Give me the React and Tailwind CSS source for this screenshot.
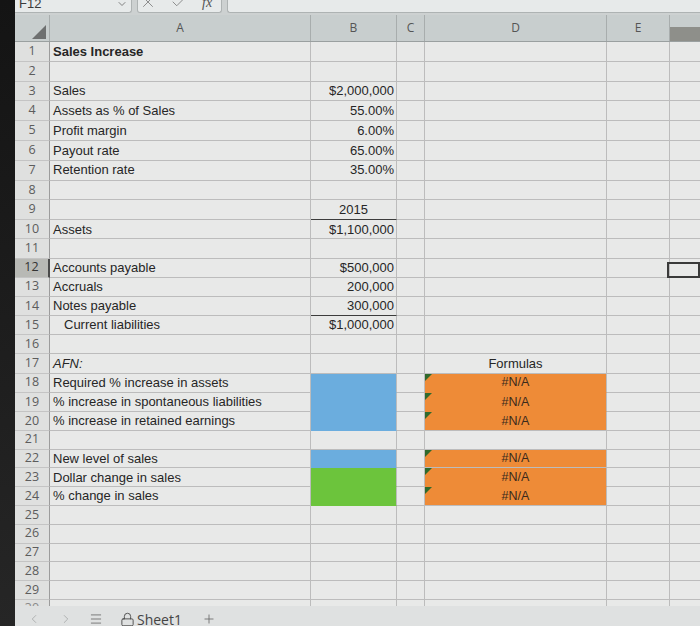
import React from 'react';
import { ChevronDown, X, Check, ChevronLeft, ChevronRight, Menu, Lock, Plus } from 'lucide-react';

const rows = [
  { n: 1, a: 'Sales Increase', aCls: 'font-bold' },
  { n: 2 },
  { n: 3, a: 'Sales', b: '$2,000,000' },
  { n: 4, a: 'Assets as % of Sales', b: '55.00%' },
  { n: 5, a: 'Profit margin', b: '6.00%' },
  { n: 6, a: 'Payout rate', b: '65.00%' },
  { n: 7, a: 'Retention rate', b: '35.00%' },
  { n: 8 },
  { n: 9, b: '2015', bCenter: true, bLine: 'bottom' },
  { n: 10, a: 'Assets', b: '$1,100,000' },
  { n: 11 },
  { n: 12, a: 'Accounts payable', b: '$500,000', selected: true },
  { n: 13, a: 'Accruals', b: '200,000' },
  { n: 14, a: 'Notes payable', b: '300,000', bLine: 'bottom' },
  { n: 15, a: 'Current liabilities', aCls: 'pl-[14px]', b: '$1,000,000' },
  { n: 16 },
  { n: 17, a: 'AFN:', aCls: 'italic', d: 'Formulas' },
  { n: 18, a: 'Required % increase in assets', fill: 'blue', d: '#N/A', orange: true },
  { n: 19, a: '% increase in spontaneous liabilities', fill: 'blue', d: '#N/A', orange: true },
  { n: 20, a: '% increase in retained earnings', fill: 'blue', d: '#N/A', orange: true, last: true },
  { n: 21 },
  { n: 22, a: 'New level of sales', fill: 'blue', d: '#N/A', orange: true, last: true },
  { n: 23, a: 'Dollar change in sales', fill: 'green', d: '#N/A', orange: true },
  { n: 24, a: '% change in sales', fill: 'green', d: '#N/A', orange: true, last: true },
  { n: 25 },
  { n: 26 },
  { n: 27 },
  { n: 28 },
  { n: 29 },
];

function rowHeight(n) {
  if (n <= 9) return 'h-[19.8px]';
  if (n <= 19) return 'h-[19.2px]';
  return 'h-[18.8px]';
}

function bCellClass(r) {
  if (r.fill === 'blue') return 'bg-[#6badde] border-b-[#6badde]';
  if (r.fill === 'green') return 'bg-[#6cc43c] border-b-[#6cc43c]';
  if (r.bLine === 'bottom') return 'border-b-[#3c3c3c]';
  return 'border-b-[#bcbcbc]';
}

function Row({ r }) {
  const h = rowHeight(r.n);
  const bAlign = r.bCenter ? 'justify-center' : 'justify-end pr-[2px]';
  return (
    <div className={`flex ${h} text-[13px] text-[#262626]`}>
      <div
        className={`w-[35px] shrink-0 flex items-center justify-center border-b border-[#c4c4c4] text-[12.5px] font-['Open_Sans',sans-serif] ${
          r.selected ? 'bg-[#b8b9b5] border-r-2 border-r-[#4a4a4a] text-[#333]' : 'bg-[#dfe0df] border-r border-r-[#9c9c9c] text-[#5c5c5c]'
        }`}
      >
        {r.n}
      </div>
      <div className={`w-[261px] shrink-0 flex items-center pl-[3px] border-r border-b border-[#bcbcbc] whitespace-nowrap overflow-hidden ${r.aCls || ''}`}>
        {r.a}
      </div>
      <div className={`w-[86px] shrink-0 flex items-center ${bAlign} border-r border-b border-r-[#bcbcbc] ${bCellClass(r)}`}>
        {r.b}
      </div>
      <div className="w-[28px] shrink-0 border-r border-b border-[#bcbcbc]" />
      <div
        className={`relative w-[182px] shrink-0 flex items-center justify-center border-r border-b border-r-[#bcbcbc] ${
          r.orange ? (r.last ? 'bg-[#ee8b37] border-b-[#bcbcbc]' : 'bg-[#ee8b37] border-b-[#ee8b37]') : 'border-b-[#bcbcbc]'
        }`}
      >
        {r.orange && (
          <span className="absolute left-0 top-0 w-0 h-0 border-t-[7px] border-t-[#2f6a2c] border-r-[7px] border-r-transparent" />
        )}
        <span className={r.orange ? 'text-[12.5px] text-[#3a2a1c]' : ''}>{r.d}</span>
      </div>
      <div className="w-[63px] shrink-0 border-r border-b border-[#bcbcbc]" />
      <div className={`flex-1 border-b border-[#bcbcbc] ${r.selected ? 'outline-2 outline-[#3a3a3a] -outline-offset-2 -ml-[3px] mt-[3px]' : ''}`} />
    </div>
  );
}

export default function App() {
  return (
    <div className="w-[700px] h-[626px] overflow-hidden flex bg-[#1a1a1a] font-['Liberation_Sans',Arial,sans-serif]">
      {/* bezel */}
      <div className="w-[15px] shrink-0 bg-gradient-to-b from-[#141414] to-[#262626]" />

      <div className="flex-1 flex flex-col bg-[#e8e9e8] overflow-hidden">
        {/* formula bar, its top is cut by the photo */}
        <div className="h-[15px] shrink-0 flex items-start gap-[5px] bg-[#cdd1d1] overflow-hidden">
          <div className="relative w-[117px] h-[13px] bg-[#e7eaea] border-b border-r border-[#aeb3b3] rounded-br-[3px] overflow-hidden text-[#3a3a3a]">
            <span className="absolute left-[4px] bottom-[2px] text-[13px] leading-[13px]">F12</span>
            <ChevronDown className="absolute right-[3px] bottom-[2px] w-[12px] h-[12px] text-[#666]" strokeWidth={1.6} />
          </div>
          <div className="relative w-[85px] h-[13px] bg-[#e7eaea] border-b border-x border-[#aeb3b3] rounded-b-[3px] overflow-hidden text-[#7a7a7a]">
            <X className="absolute left-[1px] bottom-[1px] w-[18px] h-[18px]" strokeWidth={1.1} />
            <Check className="absolute left-[32px] bottom-[1px] w-[18px] h-[18px]" strokeWidth={1.1} />
            <span className="absolute left-[64px] bottom-[2px] italic text-[14px] leading-[14px] font-['Liberation_Serif',serif] text-[#555]">fx</span>
          </div>
          <div className="flex-1 h-[13px] bg-[#e7eaea] border-b border-l border-[#aeb3b3] rounded-bl-[3px]" />
        </div>

        {/* column headers */}
        <div className="flex h-[27px] shrink-0 bg-[#c8cece] border-b border-[#9aa0a0] text-[12px] text-[#555] font-['Open_Sans',sans-serif]">
          <div className="w-[35px] shrink-0 relative border-r border-[#a8adad]">
            <span className="absolute right-[3px] bottom-[2px] w-0 h-0 border-b-[14px] border-b-[#6e7070] border-l-[14px] border-l-transparent" />
          </div>
          <div className="w-[261px] shrink-0 flex items-center justify-center border-r border-[#a8adad]">A</div>
          <div className="w-[86px] shrink-0 flex items-center justify-center border-r border-[#a8adad]">B</div>
          <div className="w-[28px] shrink-0 flex items-center justify-center border-r border-[#a8adad]">C</div>
          <div className="w-[182px] shrink-0 flex items-center justify-center border-r border-[#a8adad]">D</div>
          <div className="w-[63px] shrink-0 flex items-center justify-center border-r border-[#a8adad]">E</div>
          <div className="flex-1 mt-[12px] bg-[#8e8f8a]" />
        </div>

        {/* rows */}
        <div className="flex flex-col shrink-0">
          {rows.map((r) => (
            <Row key={r.n} r={r} />
          ))}
        </div>

        {/* partial row 30 */}
        <div className="flex h-[6px] shrink-0 overflow-hidden">
          <div className="w-[35px] shrink-0 bg-[#dfe0df] border-r border-[#9c9c9c] text-[12.5px] text-[#8a8a8a] text-center leading-[16px] font-['Open_Sans',sans-serif]">30</div>
          <div className="w-[261px] shrink-0 border-r border-[#bcbcbc]" />
          <div className="w-[86px] shrink-0 border-r border-[#bcbcbc]" />
          <div className="w-[28px] shrink-0 border-r border-[#bcbcbc]" />
          <div className="w-[182px] shrink-0 border-r border-[#bcbcbc]" />
          <div className="w-[63px] shrink-0 border-r border-[#bcbcbc]" />
        </div>

        {/* sheet tabs */}
        <div className="flex-1 flex items-start pl-[12px] pt-[6px] bg-[#dfe1e1] text-[#a0a2a2] overflow-hidden">
          <ChevronLeft className="w-[14px] h-[14px]" strokeWidth={1.3} />
          <ChevronRight className="w-[14px] h-[14px] ml-[18px]" strokeWidth={1.3} />
          <Menu className="w-[14px] h-[14px] ml-[16px] text-[#666]" strokeWidth={1.4} />
          <div className="flex items-start gap-[2px] ml-[17px] text-[#444]">
            <Lock className="w-[15px] h-[17px] -mt-[1px]" strokeWidth={1.4} />
            <span className="text-[14px] leading-none mt-[1px] font-['Open_Sans',sans-serif]">Sheet1</span>
          </div>
          <Plus className="w-[14px] h-[14px] ml-[20px] text-[#666]" strokeWidth={1.4} />
        </div>
      </div>
    </div>
  );
}
